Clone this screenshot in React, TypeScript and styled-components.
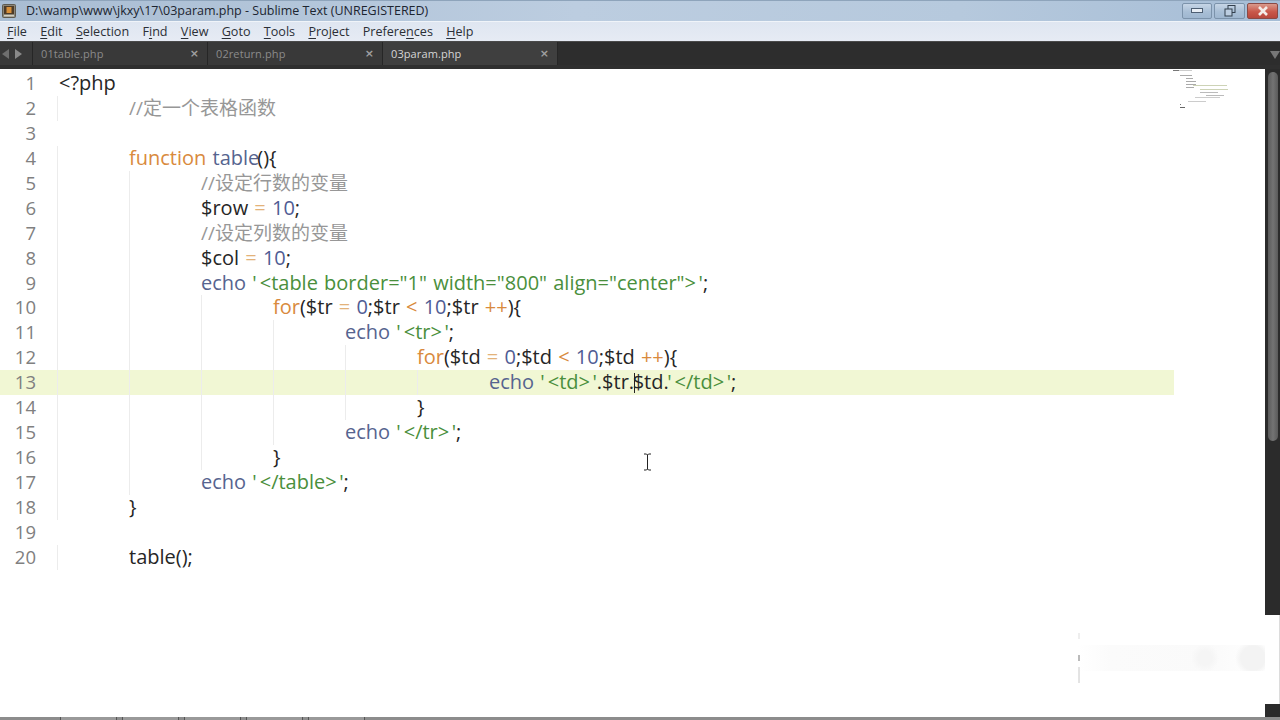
import React from 'react';
import styled, { createGlobalStyle } from 'styled-components';

const GlobalStyle = createGlobalStyle`
  html, body {
    margin: 0;
    padding: 0;
    background: #fff;
    overflow: hidden;
  }
  #root {
    width: 1280px;
    height: 720px;
  }
`;

type Part = [string, string, number?];
type CodeLine = { indent: number; parts: Part[]; active?: boolean; caretAt?: number };

const kw = '#d98a3d';
const fn = '#56648f';
const str = '#4a8f3c';
const txt = '#262626';
const cmt = '#979797';
const op = '#e3b27a';
const num = '#4f5c94';

const lines: CodeLine[] = [
  { indent: 0, parts: [['<?php', txt, 2]] },
  { indent: 1, parts: [['//定一个表格函数', cmt]] },
  { indent: 0, parts: [] },
  { indent: 1, parts: [['function', kw], [' ', txt], ['table', fn], ['(){', txt, -2]] },
  { indent: 2, parts: [['//设定行数的变量', cmt]] },
  { indent: 2, parts: [['$row ', txt], ['=', op], [' ', txt], ['10', num], [';', txt]] },
  { indent: 2, parts: [['//设定列数的变量', cmt]] },
  { indent: 2, parts: [['$col ', txt], ['=', op], [' ', txt], ['10', num], [';', txt]] },
  { indent: 2, parts: [['echo', fn], [' ', txt], ['<table border="1" width="800" align="center">', str], [';', txt]] },
  { indent: 3, parts: [['for', kw], ['($tr ', txt], ['=', op], [' ', txt], ['0', num], [';$tr ', txt], ['<', kw], [' ', txt], ['10', num], [';$tr ', txt], ['++', kw], ['){', txt]] },
  { indent: 4, parts: [['echo', fn], [' ', txt], ['<tr>', str], [';', txt]] },
  { indent: 5, parts: [['for', kw], ['($td ', txt], ['=', op], [' ', txt], ['0', num], [';$td ', txt], ['<', kw], [' ', txt], ['10', num], [';$td ', txt], ['++', kw], ['){', txt]] },
  { indent: 6, active: true, caretAt: 6, parts: [['echo', fn], [' ', txt], ['<td>', str], ['.', txt], ['$tr', txt], ['.', txt], ['$td', txt, -2.5], ['.', txt], ['</td>', str, -1.5], [';', txt]] },
  { indent: 5, parts: [['}', txt]] },
  { indent: 4, parts: [['echo', fn], [' ', txt], ['</tr>', str], [';', txt]] },
  { indent: 3, parts: [['}', txt]] },
  { indent: 2, parts: [['echo', fn], [' ', txt], ['</table>', str], [';', txt]] },
  { indent: 1, parts: [['}', txt]] },
  { indent: 0, parts: [] },
  { indent: 1, parts: [['table();', txt]] },
];

const menus: [string, string, string][] = [
  ['', 'F', 'ile'],
  ['', 'E', 'dit'],
  ['', 'S', 'election'],
  ['F', 'i', 'nd'],
  ['', 'V', 'iew'],
  ['', 'G', 'oto'],
  ['', 'T', 'ools'],
  ['', 'P', 'roject'],
  ['Prefere', 'n', 'ces'],
  ['', 'H', 'elp'],
];

const tabs = [
  { name: '01table.php', active: false },
  { name: '02return.php', active: false },
  { name: '03param.php', active: true },
];

const Window = styled.div`
  width: 1280px;
  height: 720px;
  display: flex;
  flex-direction: column;
  overflow: hidden;
  font-family: "Open Sans", "Noto Sans", "Noto Sans CJK SC", sans-serif;
  background: #fff;
`;

const TitleBar = styled.div`
  height: 21px;
  flex: none;
  box-sizing: border-box;
  display: flex;
  align-items: center;
  padding: 0 2px 1px 2px;
  gap: 10px;
  background: linear-gradient(90deg, #a9bdd3 0%, #bccde0 45%, #b6c9dd 75%, #a6bdd6 100%);
  border-top: 1px solid #8ea4bb;
`;

const TitleText = styled.div`
  flex: 1;
  font-size: 12.5px;
  color: #1c2530;
  white-space: nowrap;
`;

const WinButtons = styled.div`
  display: flex;
  gap: 2px;
`;

const WinButton = styled.div<{ $w: number; $close?: boolean }>`
  width: ${p => p.$w}px;
  height: 16px;
  box-sizing: border-box;
  display: flex;
  align-items: center;
  justify-content: center;
  border: 1px solid ${p => (p.$close ? '#8a4a45' : '#7c93ab')};
  border-radius: 2px;
  background: ${p =>
    p.$close
      ? 'linear-gradient(180deg, #d99a8c 0%, #c9584a 55%, #b8473c 100%)'
      : 'linear-gradient(180deg, #c6d5e6 0%, #a9bfd6 55%, #9fb7d0 100%)'};
`;

const MenuBar = styled.div`
  height: 20px;
  flex: none;
  box-sizing: border-box;
  display: flex;
  align-items: center;
  padding: 0 0 0 7px;
  gap: 13.3px;
  background: linear-gradient(180deg, #dfe6f1 0%, #e6ebf4 100%);
  border-top: 1px solid #f0f4f9;
  font-size: 12.6px;
  color: #2b2f36;
`;

const MenuItem = styled.span`
  u {
    text-underline-offset: 2px;
  }
`;

const TabStrip = styled.div`
  height: 28px;
  flex: none;
  display: flex;
  align-items: stretch;
  background: #2d2d2d;
  border-top: 1px solid #4a4a4a;
  border-bottom: 4px solid #2f2f2f;
  box-sizing: border-box;
  position: relative;
`;

const Arrows = styled.div`
  width: 33px;
  flex: none;
  display: flex;
  align-items: center;
  gap: 6px;
  padding-left: 2px;
  box-sizing: border-box;
  background: #393939;
  border-right: 1px solid #262626;
`;

const Arrow = styled.div<{ $left?: boolean }>`
  width: 0;
  height: 0;
  border-top: 5px solid transparent;
  border-bottom: 5px solid transparent;
  ${p => (p.$left ? 'border-right: 7px solid #6f6f6f;' : 'border-left: 7px solid #8a8a8a;')}
`;

const Tab = styled.div<{ $active?: boolean }>`
  width: 175px;
  flex: none;
  box-sizing: border-box;
  padding: 0 8px 0 8px;
  display: flex;
  align-items: center;
  justify-content: space-between;
  font-size: 11px;
  letter-spacing: 0.1px;
  color: ${p => (p.$active ? '#d6d6d6' : '#8b8b8b')};
  background: ${p => (p.$active ? '#3f3f3f' : '#393939')};
  border-right: 1px solid #262626;
`;

const TabClose = styled.span`
  font-size: 11px;
  font-weight: 700;
  color: #a0a0a0;
  font-family: "DejaVu Sans", sans-serif;
`;

const TabMenu = styled.div`
  position: absolute;
  right: 0;
  top: 9px;
  width: 0;
  height: 0;
  border-left: 5px solid transparent;
  border-right: 5px solid transparent;
  border-top: 8px solid #777;
`;

const Body = styled.div`
  flex: 1;
  min-height: 0;
  display: flex;
  background: #fff;
`;

const Editor = styled.div`
  flex: 1;
  padding-top: 2px;
  display: flex;
  flex-direction: column;
  position: relative;
  min-width: 0;
`;

const Line = styled.div<{ $active?: boolean }>`
  height: 24.95px;
  width: 1174px;
  flex: none;
  display: flex;
  align-items: stretch;
  background: ${p => (p.$active ? '#f1f7d4' : 'transparent')};
  font-size: 20px;
  line-height: 24.95px;
  white-space: pre;
`;

const LineNo = styled.div`
  width: 36px;
  flex: none;
  text-align: right;
  color: #808080;
  font-size: 18.5px;
  margin-right: 21px;
`;

const Guide = styled.span`
  width: 72px;
  flex: none;
  box-sizing: border-box;
  border-left: 1px solid #ececec;
`;

const Code = styled.div`
  word-spacing: 1px;
`;

const Token = styled.span<{ $color: string; $gap?: number; $comment?: boolean }>`
  color: ${p => p.$color};
  margin-left: ${p => p.$gap ?? 0}px;
  ${p => p.$comment && 'font-size: 19px;'}
`;

const Quoted = styled.span`
  padding: 0 2.5px 0 3px;
`;

const Caret = styled.span`
  display: inline-block;
  width: 1px;
  height: 20px;
  background: #222;
  vertical-align: -4px;
`;

const IBeam = styled.svg`
  position: absolute;
  left: 643px;
  top: 384px;
`;

const MinimapWrap = styled.svg`
  position: absolute;
  right: 37px;
  top: 0;
  filter: blur(0.4px);
`;

const Smudge = styled.div`
  position: absolute;
  right: 0;
  bottom: 46px;
  width: 188px;
  height: 26px;
  background:
    radial-gradient(circle at 176px 13px, #f3f3f3 0 12px, transparent 18px),
    radial-gradient(circle at 128px 13px, #f5f5f5 0 7px, transparent 14px),
    linear-gradient(90deg, transparent 0, #fbfbfb 18%, #fafafa 70%, transparent 100%);
`;

const Specks = styled.svg`
  position: absolute;
  left: 1075px;
  top: 562px;
`;

const ScrollTrack = styled.div`
  width: 15px;
  flex: none;
  display: flex;
  flex-direction: column;
  padding: 3px 0 0;
  box-sizing: border-box;
  background: #2b2b2b;
`;

const ScrollThumb = styled.div`
  width: 10px;
  height: 369px;
  margin: 0 auto;
  border-radius: 5px;
  background: linear-gradient(90deg, #5a5a5a, #737373 50%, #5a5a5a);
`;

const ScrollGap = styled.div`
  height: 89px;
  flex: none;
  margin-top: 174px;
  box-sizing: border-box;
  background: #fff;
  border-right: 1px solid #dcdcdc;
  width: 15px;
`;

const BottomBar = styled.div`
  height: 3px;
  flex: none;
  display: flex;
  gap: 5px;
  padding-left: 60px;
  background: #8c8c8c;
  box-sizing: border-box;
`;

const BottomCell = styled.div`
  width: 57px;
  box-sizing: border-box;
  background: #999;
  border-left: 1px solid #555;
  border-right: 1px solid #555;
`;

const CodeRow = ({ line, index }: { line: CodeLine; index: number }) => (
  <Line $active={line.active}>
    <LineNo>{index + 1}</LineNo>
    {Array.from({ length: line.indent }).map((_, i) => (
      <Guide key={i} />
    ))}
    <Code>
      {line.parts.map((p, i) => (
        <React.Fragment key={i}>
          {line.caretAt === i && <Caret />}
          <Token $color={p[1]} $gap={p[2]} $comment={p[1] === cmt}>
            {p[1] === str ? (
              <>
                '<Quoted>{p[0]}</Quoted>'
              </>
            ) : (
              p[0]
            )}
          </Token>
        </React.Fragment>
      ))}
    </Code>
  </Line>
);

const Minimap = () => (
  <MinimapWrap width="60" height="42" viewBox="0 0 60 42">
    <g fill="none" strokeWidth="1">
      <path d="M5 1.500h6" stroke="#777" />
      <path d="M11 1.500h13" stroke="#ccc" />
      <path d="M12 6.500h12M18 9.500h7M18 12.500h10M18 15.500h10M18 18.500h8" stroke="#aaa" />
      <path d="M25 16.500h34M32 20.500h28" stroke="#cdd3b6" />
      <path d="M32 23.500h18M38 26.500h18" stroke="#bbb" />
      <path d="M27 28.500h25M20 32.500h18" stroke="#ccc" />
      <path d="M12 35.500h1" stroke="#777" />
      <path d="M12 38.500h5" stroke="#666" />
    </g>
  </MinimapWrap>
);

const App = () => (
  <Window>
    <GlobalStyle />
    <TitleBar>
      <svg width="14" height="14" viewBox="0 0 14 14">
        <rect x="0.5" y="0.5" width="13" height="13" rx="1" fill="#8a8578" stroke="#5e5a50" />
        <rect x="2" y="2" width="10" height="8" fill="#4d3b28" />
        <rect x="4.500" y="3" width="5" height="6" fill="#d8903a" />
        <rect x="2" y="11" width="10" height="1.500" fill="#d2cfc2" />
      </svg>
      <TitleText>D:\wamp\www\jkxy\17\03param.php - Sublime Text (UNREGISTERED)</TitleText>
      <WinButtons>
        <WinButton $w={30}>
          <svg width="12" height="6" viewBox="0 0 12 6">
            <rect x="0.5" y="0.5" width="11" height="4" fill="#e8eef5" stroke="#4e5f73" />
          </svg>
        </WinButton>
        <WinButton $w={31}>
          <svg width="12" height="12" viewBox="0 0 12 12">
            <rect x="4" y="0.5" width="7" height="7" fill="none" stroke="#33404e" />
            <rect x="1" y="4" width="7" height="7" fill="#bccde0" stroke="#33404e" />
          </svg>
        </WinButton>
        <WinButton $w={31} $close>
          <svg width="12" height="10" viewBox="0 0 12 10">
            <path d="M2 1l8 8M10 1l-8 8" stroke="#f4ece8" strokeWidth="2.6" />
          </svg>
        </WinButton>
      </WinButtons>
    </TitleBar>
    <MenuBar>
      {menus.map(([a, u, b]) => (
        <MenuItem key={a + u + b}>
          {a}
          <u>{u}</u>
          {b}
        </MenuItem>
      ))}
    </MenuBar>
    <TabStrip>
      <Arrows>
        <Arrow $left />
        <Arrow />
      </Arrows>
      {tabs.map(t => (
        <Tab key={t.name} $active={t.active}>
          {t.name}
          <TabClose>×</TabClose>
        </Tab>
      ))}
      <TabMenu />
    </TabStrip>
    <Body>
      <Editor>
        {lines.map((l, i) => (
          <CodeRow key={i} line={l} index={i} />
        ))}
        <Minimap />
        <IBeam width="9" height="18" viewBox="0 0 9 18">
          <path d="M1 1h2.500l1 1 1-1H8M4.500 2v14M1 17h2.500l1-1 1 1H8" fill="none" stroke="#222" strokeWidth="1" />
        </IBeam>
        <Smudge />
        <Specks width="8" height="54" viewBox="0 0 8 54">
          <path d="M4 2v6" stroke="#eee" strokeWidth="2" />
          <path d="M4 24v6" stroke="#bbb" strokeWidth="2" />
          <path d="M4 36v16" stroke="#c8c8c8" strokeWidth="1" />
        </Specks>
      </Editor>
      <ScrollTrack>
        <ScrollThumb />
        <ScrollGap />
      </ScrollTrack>
    </Body>
    <BottomBar>
      {Array.from({ length: 5 }).map((_, i) => (
        <BottomCell key={i} />
      ))}
    </BottomBar>
  </Window>
);

export default App;
